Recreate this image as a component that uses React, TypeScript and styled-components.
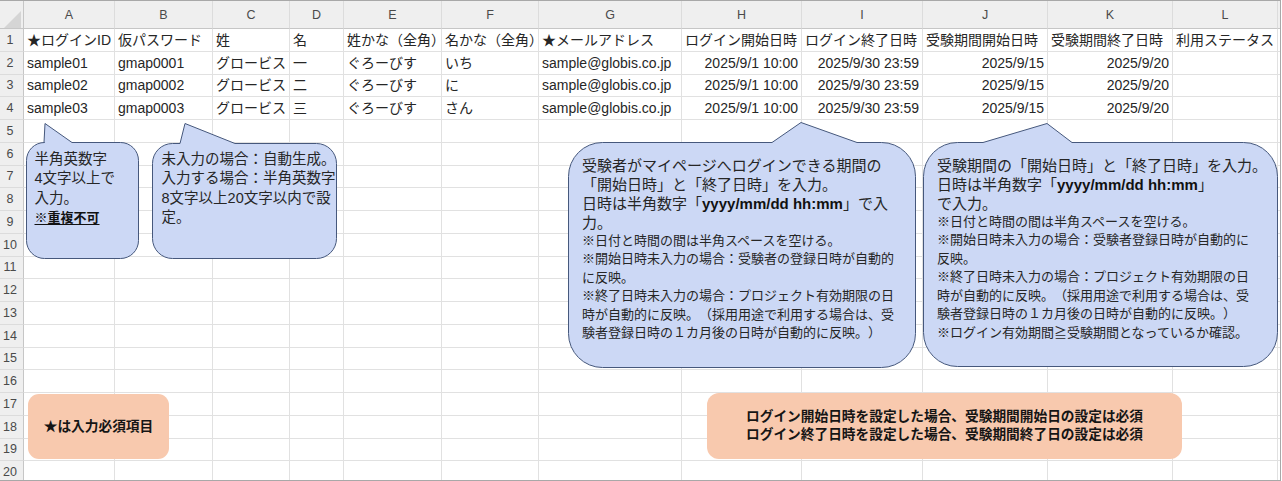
import React from "react";
import styled, { createGlobalStyle } from "styled-components";

const GlobalStyle = createGlobalStyle`
  html, body { margin: 0; padding: 0; background: #ffffff; }
  body {
    font-family: "Liberation Sans", "Noto Sans CJK JP", sans-serif;
    text-spacing-trim: space-all;
  }
  #root { width: 1282px; height: 481px; }
`;

const COLS = [91, 98, 77, 54, 98, 97, 143, 120, 121, 125, 125, 105];
const LETTERS = ["A", "B", "C", "D", "E", "F", "G", "H", "I", "J", "K", "L"];
const RIGHT_COLS = [7, 8, 9, 10];

const HEADERS = [
  "★ログインID",
  "仮パスワード",
  "姓",
  "名",
  "姓かな（全角）",
  "名かな（全角）",
  "★メールアドレス",
  "ログイン開始日時",
  "ログイン終了日時",
  "受験期間開始日時",
  "受験期間終了日時",
  "利用ステータス",
];

const makeRow = (n: string, mei: string, kana: string) => [
  `sample0${n}`,
  `gmap000${n}`,
  "グロービス",
  mei,
  "ぐろーびす",
  kana,
  "sample@globis.co.jp",
  "2025/9/1 10:00",
  "2025/9/30 23:59",
  "2025/9/15",
  "2025/9/20",
  "",
];

const DATA: string[][] = [
  HEADERS,
  makeRow("1", "一", "いち"),
  makeRow("2", "二", "に"),
  makeRow("3", "三", "さん"),
];

const Frame = styled.div`
  position: relative;
  width: 1281px;
  height: 481px;
  box-sizing: border-box;
  border-top: 1px solid #a8a8a8;
  border-right: 1px solid #a8a8a8;
  border-bottom: 1px solid #a8a8a8;
  background: #ffffff;
  overflow: hidden;
`;

const Sheet = styled.div`
  display: grid;
  grid-template-columns: 23px ${COLS.map((c) => `${c}px`).join(" ")} 1fr;
  grid-template-rows: 28px repeat(20, 22.75px);
`;

const Corner = styled.div`
  position: relative;
  background: #efefef;
  border-bottom: 1px solid #c6c6c6;
  box-sizing: border-box;
`;

const CornerMark = styled.svg`
  position: absolute;
  left: 0;
  top: 0;
`;

const ColHeader = styled.div<{ $first?: boolean }>`
  box-sizing: border-box;
  background: #efefef;
  border-bottom: 1px solid #c6c6c6;
  border-left: 1px solid ${(p) => (p.$first ? "#c6c6c6" : "#dcdcdc")};
  display: flex;
  align-items: center;
  justify-content: center;
  font-family: "Liberation Sans", "Noto Sans CJK JP", sans-serif;
  font-size: 12.5px;
  color: #4a4a4a;
  padding-top: 1px;
`;

const RowHeader = styled.div`
  box-sizing: border-box;
  background: #efefef;
  border-bottom: 1px solid #dcdcdc;
  display: flex;
  align-items: center;
  justify-content: center;
  padding-right: 3px;
  font-family: "Liberation Sans", "Noto Sans CJK JP", sans-serif;
  font-size: 12.5px;
  color: #4a4a4a;
`;

const Cell = styled.div<{ $right?: boolean; $first?: boolean }>`
  box-sizing: border-box;
  border-bottom: 1px solid #e1e1e1;
  border-left: 1px solid ${(p) => (p.$first ? "#c6c6c6" : "#e1e1e1")};
  display: flex;
  align-items: center;
  justify-content: ${(p) => (p.$right ? "flex-end" : "flex-start")};
  padding: 0 3px 0 3px;
  white-space: nowrap;
  overflow: visible;
  font-family: "Liberation Sans", "Noto Sans CJK JP", sans-serif;
  font-size: 14px;
  color: #262626;
  line-height: 1;
`;

/* ---------- callouts ---------- */

const BubbleWrap = styled.div<{ $l: number; $t: number; $w: number; $h: number }>`
  position: absolute;
  left: ${(p) => p.$l}px;
  top: ${(p) => p.$t}px;
  width: ${(p) => p.$w}px;
  height: ${(p) => p.$h}px;
`;

const BubbleShape = styled.svg`
  position: absolute;
  left: 0;
  top: 0;
  overflow: visible;
`;

const BubbleText = styled.div<{ $top: number; $pt: number; $pl: number }>`
  position: absolute;
  left: 0;
  right: 0;
  top: ${(p) => p.$top}px;
  padding: ${(p) => p.$pt}px 0 0 ${(p) => p.$pl}px;
  font-family: "Liberation Sans", "Noto Sans CJK JP", sans-serif;
  color: #262626;
  white-space: nowrap;
`;

const Line = styled.div<{ $size: number; $lh: number }>`
  font-size: ${(p) => p.$size}px;
  line-height: ${(p) => p.$lh}px;
  height: ${(p) => p.$lh}px;
`;

const Strong = styled.b`
  font-weight: 700;
  color: #111;
`;

const Warn = styled.span`
  font-size: 13px;
  font-weight: 700;
  color: #111;
  text-decoration: underline;
  text-underline-offset: 2px;
`;

type BubbleProps = {
  x: number;
  top: number;
  bottom: number;
  w: number;
  tipX: number;
  tipY: number;
  b1: number;
  b2: number;
  r: number;
  pt: number;
  pl: number;
  children: React.ReactNode;
};

const bubblePath = (w: number, h: number, ph: number, r: number, b1: number, tip: number, b2: number) => {
  const L = 0.5;
  const R = w - 0.5;
  const T = ph + 0.5;
  const B = h - 0.5;
  return [
    `M ${L + r} ${T}`,
    `L ${b1} ${T}`,
    `L ${tip} 0.5`,
    `L ${b2} ${T}`,
    `L ${R - r} ${T}`,
    `A ${r} ${r} 0 0 1 ${R} ${T + r}`,
    `L ${R} ${B - r}`,
    `A ${r} ${r} 0 0 1 ${R - r} ${B}`,
    `L ${L + r} ${B}`,
    `A ${r} ${r} 0 0 1 ${L} ${B - r}`,
    `L ${L} ${T + r}`,
    `A ${r} ${r} 0 0 1 ${L + r} ${T}`,
    "Z",
  ].join(" ");
};

const Bubble: React.FC<BubbleProps> = ({ x, top, bottom, w, tipX, tipY, b1, b2, r, pt, pl, children }) => {
  const h = bottom - tipY;
  const ph = top - tipY;
  return (
    <BubbleWrap $l={x} $t={tipY - 1} $w={w} $h={h}>
      <BubbleShape width={w} height={h} viewBox={`0 0 ${w} ${h}`}>
        <path
          d={bubblePath(w, h, ph, r, b1 - x, tipX - x, b2 - x)}
          fill="#ccd8f5"
          stroke="#46587c"
          strokeWidth={1}
        />
      </BubbleShape>
      <BubbleText $top={ph} $pt={pt} $pl={pl}>
        {children}
      </BubbleText>
    </BubbleWrap>
  );
};

/* ---------- notes ---------- */

const Note = styled.div<{ $l: number; $t: number; $w: number; $h: number; $r: number }>`
  position: absolute;
  left: ${(p) => p.$l}px;
  top: ${(p) => p.$t}px;
  width: ${(p) => p.$w}px;
  height: ${(p) => p.$h}px;
  border-radius: ${(p) => p.$r}px;
  background: #f8c9ae;
  display: flex;
  flex-direction: column;
  align-items: center;
  justify-content: center;
  font-family: "Liberation Sans", "Noto Sans CJK JP", sans-serif;
  font-weight: 700;
  font-size: 13.7px;
  line-height: 18px;
  color: #151515;
  white-space: nowrap;
`;

const BIG = 15;
const SMALL = 13;

export default function App() {
  const rows = Array.from({ length: 20 }, (_, i) => i);
  return (
    <>
      <GlobalStyle />
      <Frame>
        <Sheet>
          <Corner>
            <CornerMark width={23} height={28}>
              <polygon points="4,27 21,27 21,10" fill="#d5d5d5" />
            </CornerMark>
          </Corner>
          {LETTERS.map((l, i) => (
            <ColHeader key={l} $first={i === 0}>
              {l}
            </ColHeader>
          ))}
          <ColHeader />
          {rows.map((ri) => (
            <React.Fragment key={ri}>
              <RowHeader>{ri + 1}</RowHeader>
              {COLS.map((_, ci) => (
                <Cell key={ci} $first={ci === 0} $right={ri > 0 && RIGHT_COLS.includes(ci)}>
                  {DATA[ri] ? DATA[ri][ci] : ""}
                </Cell>
              ))}
              <Cell />
            </React.Fragment>
          ))}
        </Sheet>

        <Bubble x={26} top={142} bottom={259} w={113} tipX={45} tipY={123} b1={44} b2={72} r={18} pt={8} pl={8.5}>
          <Line $size={14.5} $lh={19.3}>半角英数字</Line>
          <Line $size={14.5} $lh={19.3}>4文字以上で</Line>
          <Line $size={14.5} $lh={19.3}>入力。</Line>
          <Line $size={14.5} $lh={19.3}>
            <Warn>※重複不可</Warn>
          </Line>
        </Bubble>

        <Bubble x={152} top={143} bottom={259} w={185} tipX={185} tipY={123} b1={180} b2={235} r={20} pt={7} pl={9.5}>
          <Line $size={14.5} $lh={19.3}>未入力の場合：自動生成。</Line>
          <Line $size={14.5} $lh={19.3}>入力する場合：半角英数字</Line>
          <Line $size={14.5} $lh={19.3}>8文字以上20文字以内で設</Line>
          <Line $size={14.5} $lh={19.3}>定。</Line>
        </Bubble>

        <Bubble x={568} top={142} bottom={368} w={348} tipX={801} tipY={122} b1={772} b2={857} r={34} pt={13.5} pl={14}>
          <Line $size={BIG} $lh={19}>受験者がマイページへログインできる期間の</Line>
          <Line $size={BIG} $lh={19}>「開始日時」と「終了日時」を入力。</Line>
          <Line $size={BIG} $lh={19}>
            日時は半角数字「<Strong>yyyy/mm/dd hh:mm</Strong>」で入
          </Line>
          <Line $size={BIG} $lh={19}>力。</Line>
          <Line $size={SMALL} $lh={18.5}>※日付と時間の間は半角スペースを空ける。</Line>
          <Line $size={SMALL} $lh={18.5}>※開始日時未入力の場合：受験者の登録日時が自動的</Line>
          <Line $size={SMALL} $lh={18.5}>に反映。</Line>
          <Line $size={SMALL} $lh={18.5}>※終了日時未入力の場合：プロジェクト有効期限の日</Line>
          <Line $size={SMALL} $lh={18.5}>時が自動的に反映。（採用用途で利用する場合は、受</Line>
          <Line $size={SMALL} $lh={18.5}>験者登録日時の１カ月後の日時が自動的に反映。）</Line>
        </Bubble>

        <Bubble x={923} top={142} bottom={367} w={355} tipX={1047} tipY={123} b1={983} b2={1072} r={34} pt={13.5} pl={14}>
          <Line $size={BIG} $lh={19}>受験期間の「開始日時」と「終了日時」を入力。</Line>
          <Line $size={BIG} $lh={19}>
            日時は半角数字「<Strong>yyyy/mm/dd hh:mm</Strong>」
          </Line>
          <Line $size={BIG} $lh={19}>で入力。</Line>
          <Line $size={SMALL} $lh={18.5}>※日付と時間の間は半角スペースを空ける。</Line>
          <Line $size={SMALL} $lh={18.5}>※開始日時未入力の場合：受験者登録日時が自動的に</Line>
          <Line $size={SMALL} $lh={18.5}>反映。</Line>
          <Line $size={SMALL} $lh={18.5}>※終了日時未入力の場合：プロジェクト有効期限の日</Line>
          <Line $size={SMALL} $lh={18.5}>時が自動的に反映。（採用用途で利用する場合は、受</Line>
          <Line $size={SMALL} $lh={18.5}>験者登録日時の１カ月後の日時が自動的に反映。）</Line>
          <Line $size={SMALL} $lh={18.5}>※ログイン有効期間≧受験期間となっているか確認。</Line>
        </Bubble>

        <Note $l={28} $t={393} $w={141} $h={65} $r={11}>
          ★は入力必須項目
        </Note>

        <Note $l={707} $t={392} $w={475} $h={66} $r={12}>
          <div>ログイン開始日時を設定した場合、受験期間開始日の設定は必須</div>
          <div>ログイン終了日時を設定した場合、受験期間終了日の設定は必須</div>
        </Note>
      </Frame>
    </>
  );
}
